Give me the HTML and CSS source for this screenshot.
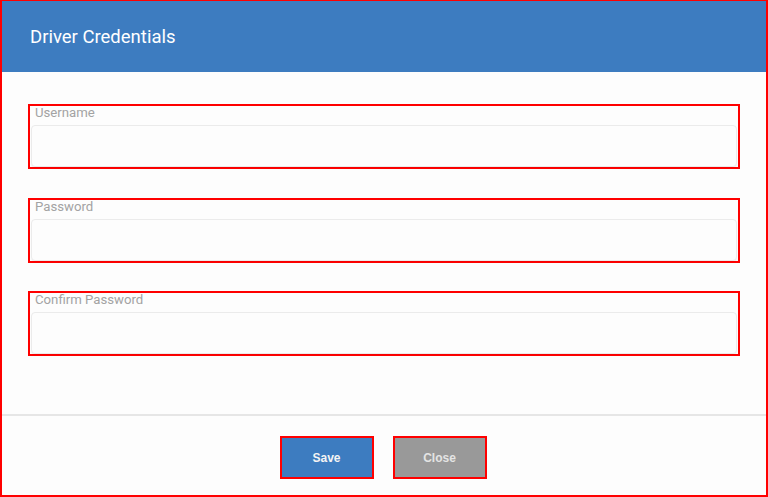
FILE: index.html
```html
<!DOCTYPE html>
<html>
<head>
<meta charset="utf-8">
<link rel="stylesheet" href="styles.css">
</head>
<body>
<div class="dialog">
  <div class="header"><h1 class="title">Driver Credentials</h1></div>
  <div class="content">
    <div class="field">
      <label class="label">Username</label>
      <input class="input" type="text">
    </div>
    <div class="field">
      <label class="label">Password</label>
      <input class="input" type="password">
    </div>
    <div class="field">
      <label class="label">Confirm Password</label>
      <input class="input" type="password">
    </div>
  </div>
  <div class="footer">
    <button class="btn btn-save">Save</button>
    <button class="btn btn-close">Close</button>
  </div>
</div>
</body>
</html>
```
FILE: styles.css
```css
html, body {
  margin: 0;
  padding: 0;
  background: #ffffff;
}
.dialog {
  box-sizing: border-box;
  width: 768px;
  height: 497px;
  border: 2px solid #ff0000;
  border-top-width: 1px;
  background: #fdfdfd;
  display: flex;
  flex-direction: column;
  font-family: Roboto, "Liberation Sans", sans-serif;
}
.header {
  height: 71px;
  background: #3d7cc0;
  display: flex;
  align-items: center;
  padding-left: 28px;
  flex-shrink: 0;
}
.title {
  margin: 0;
  color: #ffffff;
  font-size: 18.5px;
  font-weight: 400;
  padding-top: 1px;
}
.content {
  height: 342px;
  box-sizing: border-box;
  padding: 32px 26px 0 26px;
  display: flex;
  flex-direction: column;
  gap: 28.5px;
}
.field {
  box-sizing: border-box;
  height: 65px;
  border: 2px solid #ff0000;
  display: flex;
  flex-direction: column;
  padding: 0 1px;
}
.label {
  font-size: 13.2px;
  color: #a3a3a3;
  padding-left: 4px;
  height: 19px;
  line-height: 13px;
  padding-top: 0;
  box-sizing: border-box;
}
.input {
  box-sizing: border-box;
  height: 42px;
  width: 100%;
  border: 1px solid #ebebeb;
  border-radius: 4px;
  background: #fdfdfd;
  box-shadow: 0 1px 1px rgba(0,0,0,0.04);
  margin: 0;
  outline: none;
}
.footer {
  border-top: 2px solid #e6e6e6;
  display: flex;
  justify-content: center;
  gap: 19px;
  padding-top: 20px;
  padding-right: 2px;
}
.btn {
  box-sizing: border-box;
  width: 94px;
  height: 43px;
  border: 2px solid #ff0000;
  font-family: "Liberation Sans", Arial, sans-serif;
  font-weight: 700;
  font-size: 12px;
  padding: 0;
  margin: 0;
}
.btn-save {
  background: #3d7cc0;
  color: #f4f4f4;
}
.btn-close {
  background: #999999;
  color: #e4e4e4;
}
```
